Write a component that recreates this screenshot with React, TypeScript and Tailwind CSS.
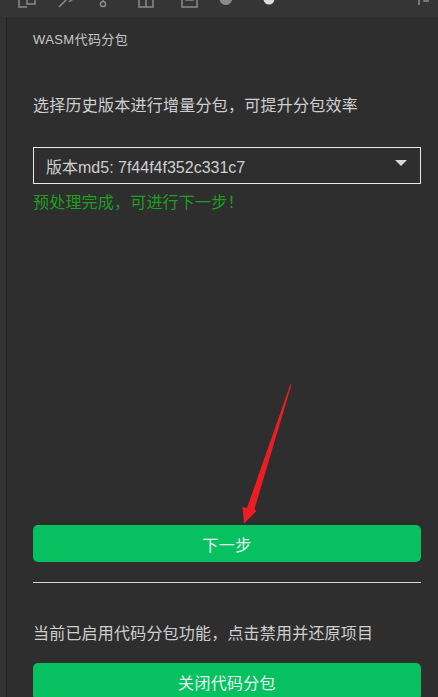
const font = { fontFamily: '"Liberation Sans", "Noto Sans CJK SC", sans-serif' };

function ToolbarIcons() {
  return (
    <svg className="h-[17px] w-full block" viewBox="0 0 438 17" fill="none" stroke="#8a8a8a" strokeWidth="1.5">
      <path d="M19 -4V7H27M27 -4V4H35V-4" />
      <path d="M59 7L66 0M66 0L69 -3M69 2L73 -1" />
      <circle cx="103" cy="4" r="2.6" />
      <path d="M103 -4V1" />
      <path d="M139 -4V7H153V-4M146 -4V7" />
      <path d="M182 -4V7H197V-4M186 -4V0H193V-4" />
      <path d="M219 -4H233C233 2 229 5 226 5C222 5 219 2 219 -4Z" fill="#8a8a8a" stroke="none" />
      <circle cx="269" cy="-1" r="5.5" fill="#dddddd" stroke="none" />
      <path d="M419 5V-4M424 -4V1H429" />
    </svg>
  );
}

function RedArrow() {
  return (
    <svg className="absolute left-[240px] top-[383px] pointer-events-none" width="54" height="142" viewBox="0 0 54 142">
      <path d="M50.5 1L51.5 1.5L14.5 126L16.5 128L4 140.5L2.5 124L7 125Z" fill="#ee1c25" />
    </svg>
  );
}

export default function App() {
  return (
    <div className="relative w-[438px] h-[697px] overflow-hidden bg-[#2e2e2e] flex" style={font}>
      <div className="w-[7px] shrink-0 bg-[#333333] border-r border-[#232323]" />
      <div className="flex-1 min-w-0 flex flex-col">
        <div className="h-[17px] -ml-[7px] bg-[#353535]">
          <ToolbarIcons />
        </div>
        <div className="pl-[26px] pr-[17px] flex flex-col">
          <div className="mt-[15px] h-4 text-[13px] tracking-[0.4px] leading-4 text-[#c8c8c8]">WASM代码分包</div>
          <div className="mt-[46px] h-6 text-[16px] tracking-[0.25px] leading-6 text-[#d0d0d0]">{"选择历史版本进行增量分包\uFF0C可提升分包效率"}</div>
          <div className="mt-[29px] h-[37px] border border-[#e8e8e8] flex items-center justify-between pl-3 pr-[13px]">
            <span className="text-[16px] mt-[4px] text-[#cfcfcf]">版本md5: 7f44f4f352c331c7</span>
            <span className="mb-[5px] w-0 h-0 border-x-[6.5px] border-x-transparent border-t-[6px] border-t-[#d8d8d8]" />
          </div>
          <div className="mt-[9px] h-5 text-[16px] tracking-[0.2px] leading-5 text-[#1f9e1f]">{"预处理完成\uFF0C可进行下一步\uFF01"}</div>
          <button className="mt-[312px] h-[37px] w-full rounded-[5px] bg-[#07c160] text-[16px] tracking-[0.3px] pt-[5px] text-[#e8f5ee]">下一步</button>
          <div className="mt-5 h-px bg-[#d6d6d6]" />
          <div className="mt-[39px] h-6 text-[16px] tracking-[0.2px] leading-6 text-[#cfcfcf]">{"当前已启用代码分包功能\uFF0C点击禁用并还原项目"}</div>
          <button className="mt-[17px] h-[37px] w-full rounded-[5px] bg-[#07c160] text-[16px] tracking-[0.3px] pt-[5px] text-[#e8f5ee]">关闭代码分包</button>
        </div>
      </div>
      <RedArrow />
    </div>
  );
}
